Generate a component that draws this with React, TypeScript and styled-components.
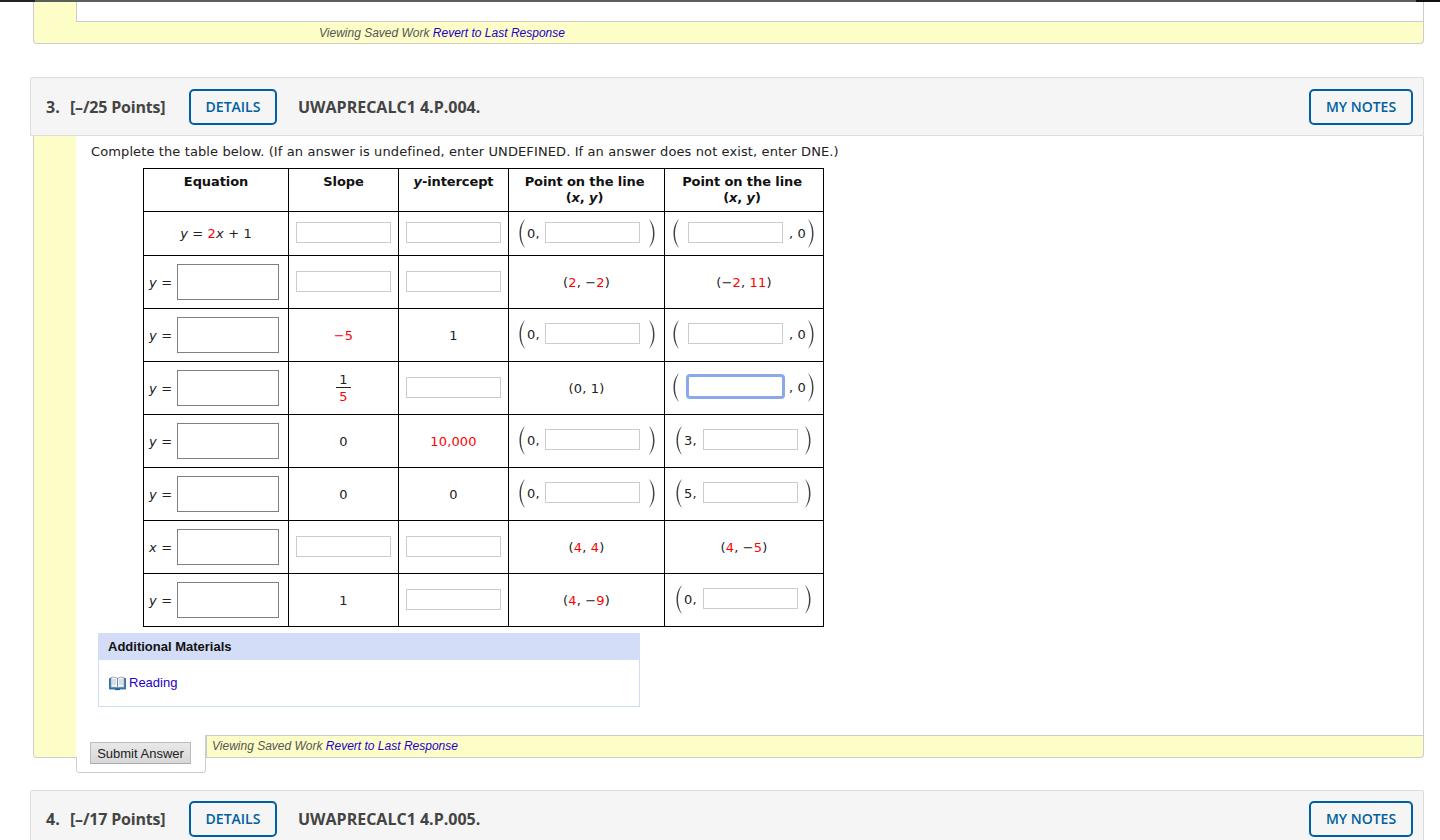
import React from "react";
import styled, { createGlobalStyle } from "styled-components";

const Global = createGlobalStyle`
  html, body { margin: 0; padding: 0; background: #fff; }
  body { height: 840px; overflow: hidden; font-family: "DejaVu Sans", Verdana, sans-serif; }
`;

const TopBar = styled.div`
  height: 2px;
  background: linear-gradient(90deg, #222 0, #222 35px, #5a5f5c 35px, #5a5f5c 1416px, #111 1416px);
`;
const Page = styled.div`
  display: flex;
  flex-direction: column;
  padding: 0 16px 0 30px;
`;
const PrevCard = styled.div`
  margin-left: 3px;
  box-sizing: border-box;
  height: 42px;
  background: #fdfdc8;
  border: 1px solid #ccc;
  border-top: 0;
  border-radius: 0 0 4px 4px;
  display: flex;
  flex-direction: column;
`;
const PrevWhite = styled.div`
  height: 19px;
  flex: none;
  margin-left: 42px;
  background: #fff;
  border-bottom: 1px solid #ccc;
  border-left: 1px solid #ccc;
`;
const SavedNote = styled.div<{ $indent: number; $lh: number }>`
  font: italic 12px/${(p) => p.$lh}px "Liberation Sans", Arial, sans-serif;
  color: #555;
  padding-left: ${(p) => p.$indent}px;
`;
const RevertLink = styled.a`
  color: #2200cc;
`;
const QHeader = styled.div<{ $top: number; $h: number }>`
  margin-top: ${(p) => p.$top}px;
  box-sizing: border-box;
  height: ${(p) => p.$h}px;
  flex: none;
  display: flex;
  align-items: center;
  background: #f5f5f5;
  border: 1px solid #ddd;
  border-radius: 2px 2px 0 0;
  padding: 0 10px 0 15px;
  font-family: "Open Sans", sans-serif;
  font-weight: 700;
  font-size: 16px;
  color: #444;
`;
const QNum = styled.span`
  width: 24px;
`;
const QPoints = styled.span`
  width: 119px;
  letter-spacing: -0.2px;
`;
const QTitle = styled.span`
  margin-left: 21px;
  flex: 1;
`;
const OutlineButton = styled.button<{ $w: number }>`
  box-sizing: border-box;
  width: ${(p) => p.$w}px;
  height: 36px;
  border: 2px solid #00609f;
  border-radius: 5px;
  background: transparent;
  color: #00609f;
  font: 600 14px "Open Sans", sans-serif;
  padding: 0;
`;
const QBody = styled.div`
  margin-left: 3px;
  height: 622px;
  flex: none;
  box-sizing: border-box;
  background: #fdfdc8;
  border: 1px solid #ccc;
  border-top: 0;
  border-radius: 0 0 4px 4px;
  display: flex;
  flex-direction: column;
`;
const QContent = styled.div`
  flex: 1;
  margin-left: 42px;
  background: #fff;
  padding: 8px 0 0 15px;
`;
const Instruction = styled.div`
  font-size: 13px;
  line-height: 16px;
  color: #222;
  letter-spacing: 0.11px;
`;
const Grid = styled.table`
  margin: 8px 0 0 52px;
  border-collapse: collapse;
  table-layout: fixed;
  width: 680px;
  font-size: 13px;
  color: #222;
  letter-spacing: 0.15px;
  td, th { border: 1px solid #000; padding: 0; text-align: center; }
`;
const HeadCell = styled.th<{ $shift?: number }>`
  height: 43px;
  vertical-align: top;
  box-sizing: border-box;
  padding: 5px ${(p) => p.$shift ?? 0}px 0 0 !important;
  font-weight: 700;
  line-height: 16px;
  color: #111;
  letter-spacing: -0.1px;
`;
const Row = styled.tr<{ $h: number }>`
  height: ${(p) => p.$h}px;
`;
const Red = styled.span`
  color: #f00;
`;
const Var = styled.i``;
const EqCell = styled.div`
  display: flex;
  align-items: center;
  justify-content: space-between;
  padding: 0 9px 0 5px;
`;
const EqInput = styled.input`
  box-sizing: border-box;
  width: 102px;
  height: 36px;
  border: 1px solid #808080;
  padding: 0;
  background: #fff;
`;
const SmallInput = styled.input<{ $focused?: boolean }>`
  box-sizing: border-box;
  width: 95px;
  height: 21px;
  flex: none;
  border: 1px solid #ccc;
  padding: 0;
  margin: 0 0 2px;
  background: #fff;
  vertical-align: middle;
  ${(p) => p.$focused && "border-color: #8ca8ea; border-radius: 2px; box-shadow: 0 0 0 2px #8ca8ea;"}
`;
const PointCell = styled.div<{ $pad: number }>`
  display: flex;
  align-items: center;
  padding: 0 0 1px ${(p) => p.$pad}px;
`;
const Gap = styled.span<{ $w: number; $inset?: number }>`
  display: inline-block;
  box-sizing: border-box;
  flex: none;
  width: ${(p) => p.$w}px;
  padding-left: ${(p) => p.$inset ?? 0}px;
  text-align: left;
  white-space: nowrap;
`;
const ParenSvg = styled.svg`
  flex: none;
  display: block;
`;
const Fraction = styled.div`
  display: inline-flex;
  flex-direction: column;
  align-items: center;
  line-height: 15px;
`;
const FracTop = styled.span`
  border-bottom: 1px solid #222;
  padding: 0 3px;
`;
const FracBottom = styled.span`
  color: #f00;
  padding-top: 1px;
`;
const Materials = styled.div`
  margin: 6px 0 0 7px;
  width: 542px;
  height: 74px;
  box-sizing: border-box;
  border: 1px solid #cfdcf5;
  border-top: 0;
`;
const MaterialsHead = styled.div`
  height: 27px;
  margin: 0 -1px;
  padding-left: 10px;
  background: #d3ddf7;
  font: 700 13px/27px "Liberation Sans", Arial, sans-serif;
  color: #111;
`;
const ReadingRow = styled.div`
  display: flex;
  align-items: center;
  gap: 3px;
  padding: 15px 0 0 10px;
  font: 13px/16px "Liberation Sans", Arial, sans-serif;
  color: #2200cc;
`;
const Footer = styled.div`
  display: flex;
  height: 22px;
  flex: none;
`;
const SubmitTab = styled.div`
  box-sizing: border-box;
  margin-left: 42px;
  width: 130px;
  height: 38px;
  flex: none;
  background: linear-gradient(#ccc, #ccc) 0 22px / 1px 100% no-repeat, #fff;
  border: 0 solid #ccc;
  border-width: 0 1px 1px 0;
  border-radius: 0 0 4px 4px;
  padding: 7px 0 0 14px;
`;
const SubmitButton = styled.button`
  box-sizing: border-box;
  width: 101px;
  height: 22px;
  padding: 0;
  background: linear-gradient(#e8e8e8, #d8d8d8);
  border: 1px solid #bbb;
  border-bottom-color: #aaa;
  font: 13px "Liberation Sans", Arial, sans-serif;
  color: #222;
`;
const FooterNote = styled.div`
  flex: 1;
  border-top: 1px solid #ccc;
  border-left: 1px solid #ccc;
  height: 21px;
`;

const LeftParen = () => (
  <ParenSvg width="7" height="29" viewBox="0 0 7 29">
    <path d="M6 0C2 4 .5 9 .5 14.500S2 25 6 29C3.200 24.500 2 19.500 2 14.500S3.200 4.500 6 0Z" fill="#444" />
  </ParenSvg>
);
const RightParen = () => (
  <ParenSvg width="7" height="29" viewBox="0 0 7 29">
    <path d="M1 0C5 4 6.500 9 6.500 14.500S5 25 1 29C3.800 24.500 5 19.500 5 14.500S3.800 4.500 1 0Z" fill="#444" />
  </ParenSvg>
);

const Book = () => (
  <svg width="17" height="15" viewBox="0 0 17 15">
    <path d="M0.500 2.500H8.500V13H0.500ZM8.500 2.500H16.500V13H8.500Z" fill="#3f86c4" stroke="#1d5c92" strokeWidth=".8" />
    <path d="M2 1.500C4 1 7 1 8.500 2.500V12C7 11 4 11 2 11.500ZM15 1.500C13 1 10 1 8.500 2.500V12C10 11 13 11 15 11.500Z" fill="#f4f7fb" stroke="#5a7590" strokeWidth=".6" />
    <path d="M3 4H7M3 6H7M3 8H7M10 4H14M10 6H14M10 8H14" stroke="#9db1c4" strokeWidth=".7" />
    <path d="M6 13.500H11" stroke="#1d5c92" strokeWidth="1.200" />
  </svg>
);

const ZeroLeft = () => (
  <PointCell $pad={10}>
    <LeftParen />
    <Gap $w={19} $inset={1}>0,</Gap>
    <SmallInput />
    <Gap $w={8} />
    <RightParen />
  </PointCell>
);
const ZeroRight = ({ focused }: { focused?: boolean }) => (
  <PointCell $pad={8}>
    <LeftParen />
    <Gap $w={8} />
    <SmallInput $focused={focused} />
    <Gap $w={24} $inset={6}>, 0</Gap>
    <RightParen />
  </PointCell>
);
const FixedX = ({ v }: { v: string }) => (
  <PointCell $pad={11}>
    <LeftParen />
    <Gap $w={20} $inset={1}>{v}</Gap>
    <SmallInput />
    <Gap $w={6} />
    <RightParen />
  </PointCell>
);
const Equation = ({ v }: { v: string }) => (
  <EqCell>
    <span>
      <Var>{v}</Var> =
    </span>
    <EqInput />
  </EqCell>
);

const Question = ({ top, h, n, pts, code }: { top: number; h: number; n: string; pts: string; code: string }) => (
  <QHeader $top={top} $h={h}>
    <QNum>{n}</QNum>
    <QPoints>{pts}</QPoints>
    <OutlineButton $w={88}>DETAILS</OutlineButton>
    <QTitle>{code}</QTitle>
    <OutlineButton $w={104}>MY NOTES</OutlineButton>
  </QHeader>
);

export default function App() {
  return (
    <>
      <Global />
      <TopBar />
      <Page>
        <PrevCard>
          <PrevWhite />
          <SavedNote $indent={285} $lh={23}>
            Viewing Saved Work <RevertLink>Revert to Last Response</RevertLink>
          </SavedNote>
        </PrevCard>
        <Question top={33} h={59} n="3." pts="[–/25 Points]" code="UWAPRECALC1 4.P.004." />
        <QBody>
          <QContent>
            <Instruction>
              Complete the table below. (If an answer is undefined, enter UNDEFINED. If an answer does not exist, enter DNE.)
            </Instruction>
            <Grid>
              <colgroup>
                <col width="145" />
                <col width="110" />
                <col width="110" />
                <col width="156" />
                <col width="159" />
              </colgroup>
              <thead>
                <tr>
                  <HeadCell>Equation</HeadCell>
                  <HeadCell>Slope</HeadCell>
                  <HeadCell>
                    <Var>y</Var>-intercept
                  </HeadCell>
                  <HeadCell $shift={4}>
                    Point on the line
                    <br />(<Var>x</Var>, <Var>y</Var>)
                  </HeadCell>
                  <HeadCell $shift={4}>
                    Point on the line
                    <br />(<Var>x</Var>, <Var>y</Var>)
                  </HeadCell>
                </tr>
              </thead>
              <tbody>
                <Row $h={44}>
                  <td>
                    <Var>y</Var> = <Red>2</Red>
                    <Var>x</Var> + 1
                  </td>
                  <td><SmallInput /></td>
                  <td><SmallInput /></td>
                  <td><ZeroLeft /></td>
                  <td><ZeroRight /></td>
                </Row>
                <Row $h={53}>
                  <td><Equation v="y" /></td>
                  <td><SmallInput /></td>
                  <td><SmallInput /></td>
                  <td>
                    (<Red>2</Red>, −<Red>2</Red>)
                  </td>
                  <td>
                    (−<Red>2</Red>, <Red>11</Red>)
                  </td>
                </Row>
                <Row $h={53}>
                  <td><Equation v="y" /></td>
                  <td><Red>−5</Red></td>
                  <td>1</td>
                  <td><ZeroLeft /></td>
                  <td><ZeroRight /></td>
                </Row>
                <Row $h={53}>
                  <td><Equation v="y" /></td>
                  <td>
                    <Fraction>
                      <FracTop>1</FracTop>
                      <FracBottom>5</FracBottom>
                    </Fraction>
                  </td>
                  <td><SmallInput /></td>
                  <td>(0, 1)</td>
                  <td><ZeroRight focused /></td>
                </Row>
                <Row $h={53}>
                  <td><Equation v="y" /></td>
                  <td>0</td>
                  <td><Red>10,000</Red></td>
                  <td><ZeroLeft /></td>
                  <td><FixedX v="3," /></td>
                </Row>
                <Row $h={53}>
                  <td><Equation v="y" /></td>
                  <td>0</td>
                  <td>0</td>
                  <td><ZeroLeft /></td>
                  <td><FixedX v="5," /></td>
                </Row>
                <Row $h={53}>
                  <td><Equation v="x" /></td>
                  <td><SmallInput /></td>
                  <td><SmallInput /></td>
                  <td>
                    (<Red>4</Red>, <Red>4</Red>)
                  </td>
                  <td>
                    (<Red>4</Red>, −<Red>5</Red>)
                  </td>
                </Row>
                <Row $h={53}>
                  <td><Equation v="y" /></td>
                  <td>1</td>
                  <td><SmallInput /></td>
                  <td>
                    (<Red>4</Red>, −<Red>9</Red>)
                  </td>
                  <td><FixedX v="0," /></td>
                </Row>
              </tbody>
            </Grid>
            <Materials>
              <MaterialsHead>Additional Materials</MaterialsHead>
              <ReadingRow>
                <Book />
                Reading
              </ReadingRow>
            </Materials>
          </QContent>
          <Footer>
            <SubmitTab>
              <SubmitButton>Submit Answer</SubmitButton>
            </SubmitTab>
            <FooterNote>
              <SavedNote $indent={5} $lh={21}>
                Viewing Saved Work <RevertLink>Revert to Last Response</RevertLink>
              </SavedNote>
            </FooterNote>
          </Footer>
        </QBody>
        <Question top={32} h={57} n="4." pts="[–/17 Points]" code="UWAPRECALC1 4.P.005." />
      </Page>
    </>
  );
}
